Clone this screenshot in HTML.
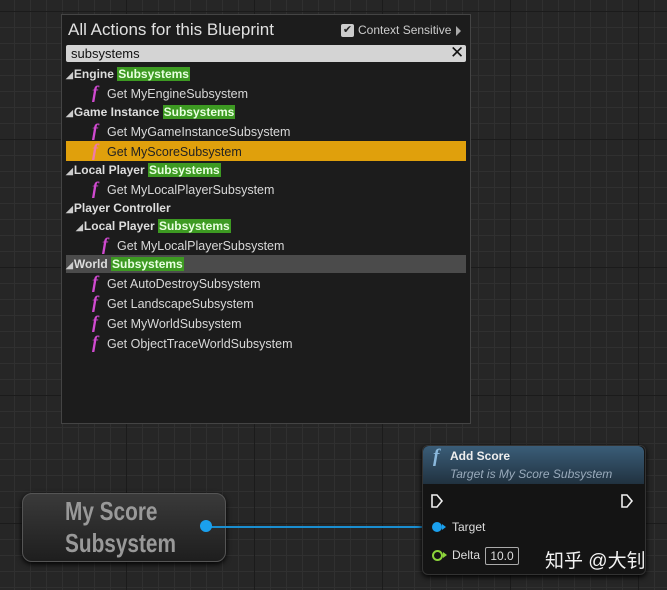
<!DOCTYPE html>
<html><head><style>
body{margin:0;width:667px;height:590px;overflow:hidden;position:relative;font-family:"Liberation Sans",sans-serif;
background-color:#262626;
background-image:linear-gradient(#1b1b1b 1px,transparent 1px),linear-gradient(90deg,#1b1b1b 1px,transparent 1px),linear-gradient(#303030 1px,transparent 1px),linear-gradient(90deg,#303030 1px,transparent 1px);
background-size:128px 128px,128px 128px,16px 16px,16px 16px;background-position:-2px 11px,-2px 11px,-2px 11px,-2px 11px;}
.a{position:absolute;white-space:nowrap}
#panel{left:61px;top:14px;width:408px;height:408px;background:#1c1c1c;border:1px solid #444;}
.h{font-weight:bold;font-size:12px;color:#ddd;height:18px;line-height:18px}
.g{background:#3d9a22;color:#e8ffe0;padding:0 1px}
.i{font-size:12.5px;color:#d8d8d8;height:20px;line-height:19px}
.f{display:inline-block;width:15px;color:#d04ad0;font-family:"Liberation Serif",serif;font-style:italic;font-weight:bold;font-size:18px}
.t{font-size:9px;color:#ccc;margin-right:1px}
</style></head><body>
<div class="a" id="panel"></div>
<div class="a" style="left:68px;top:20px;font-size:17px;color:#e0e0e0">All Actions for this Blueprint</div>
<div class="a" style="left:341px;top:24px;width:13px;height:13px;background:#ccc;border-radius:2px;color:#222;font-size:11px;line-height:13px;text-align:center">✔</div>
<div class="a" style="left:358px;top:23px;font-size:12px;color:#ccc">Context Sensitive</div>
<div class="a" style="left:456px;top:26px;width:0;height:0;border-left:5px solid #aaa;border-top:5px solid transparent;border-bottom:5px solid transparent"></div>
<div class="a" style="left:66px;top:45px;width:400px;height:17px;background:#d4d4d4;border-radius:2px"></div>
<div class="a" style="left:71px;top:45px;font-size:13px;line-height:17px;color:#111">subsystems</div>
<div class="a" style="left:450px;top:43px;font-size:17px;line-height:19px;color:#111">✕</div>

<div class="a" style="left:66px;top:141px;width:400px;height:20px;background:#e0a00c"></div>
<div class="a" style="left:66px;top:255px;width:400px;height:18px;background:#4b4b4b"></div>

<div class="a h" style="left:66px;top:65px"><span class="t">◢</span>Engine <span class="g">Subsystems</span></div>
<div class="a i" style="left:92px;top:83px"><span class="f">f</span>Get MyEngineSubsystem</div>
<div class="a h" style="left:66px;top:103px"><span class="t">◢</span>Game Instance <span class="g">Subsystems</span></div>
<div class="a i" style="left:92px;top:121px"><span class="f">f</span>Get MyGameInstanceSubsystem</div>
<div class="a i" style="left:92px;top:141px;color:#222"><span class="f" style="color:#f07aa8">f</span>Get MyScoreSubsystem</div>
<div class="a h" style="left:66px;top:161px"><span class="t">◢</span>Local Player <span class="g">Subsystems</span></div>
<div class="a i" style="left:92px;top:179px"><span class="f">f</span>Get MyLocalPlayerSubsystem</div>
<div class="a h" style="left:66px;top:199px"><span class="t">◢</span>Player Controller</div>
<div class="a h" style="left:76px;top:217px"><span class="t">◢</span>Local Player <span class="g">Subsystems</span></div>
<div class="a i" style="left:102px;top:235px"><span class="f">f</span>Get MyLocalPlayerSubsystem</div>
<div class="a h" style="left:66px;top:255px"><span class="t">◢</span>World <span class="g">Subsystems</span></div>
<div class="a i" style="left:92px;top:273px"><span class="f">f</span>Get AutoDestroySubsystem</div>
<div class="a i" style="left:92px;top:293px"><span class="f">f</span>Get LandscapeSubsystem</div>
<div class="a i" style="left:92px;top:313px"><span class="f">f</span>Get MyWorldSubsystem</div>
<div class="a i" style="left:92px;top:333px"><span class="f">f</span>Get ObjectTraceWorldSubsystem</div>

<div class="a" style="left:22px;top:493px;width:202px;height:67px;border-radius:10px;background:linear-gradient(#3a3a3a,#1e1e1e);border:1px solid #555;box-shadow:0 2px 6px #000"></div>
<div class="a" style="left:65px;top:495px;font-size:26px;font-weight:bold;color:#999;line-height:32px;transform:scaleX(0.8);transform-origin:0 0">My Score<br>Subsystem</div>
<div class="a" style="left:207px;top:526px;width:220px;height:2px;background:#1a8ed0"></div>
<div class="a" style="left:200px;top:520px;width:12px;height:12px;border-radius:50%;background:#1aa0ee"></div>

<div class="a" style="left:422px;top:445px;width:222px;height:128px;border-radius:6px;background:#141414;border:1px solid #333;box-shadow:0 2px 6px #000"></div>
<div class="a" style="left:423px;top:446px;width:221px;height:38px;border-radius:6px 6px 0 0;background:linear-gradient(#3a5d78,#213240)"></div>
<div class="a" style="left:433px;top:446px;font-family:'Liberation Serif',serif;font-style:italic;font-weight:bold;font-size:19px;color:#8ab8dc">f</div>
<div class="a" style="left:450px;top:449px;font-size:12px;font-weight:bold;color:#eee">Add Score</div>
<div class="a" style="left:450px;top:467px;font-size:12px;font-style:italic;color:#9ab">Target is My Score Subsystem</div>
<svg class="a" style="left:430px;top:493px" width="14" height="16"><path d="M2 2h5l5 6-5 6H2z" fill="none" stroke="#eee" stroke-width="1.6"/></svg>
<svg class="a" style="left:620px;top:493px" width="14" height="16"><path d="M2 2h5l5 6-5 6H2z" fill="none" stroke="#eee" stroke-width="1.6"/></svg>
<div class="a" style="left:432px;top:522px;width:10px;height:10px;border-radius:50%;background:#1aa0ee"></div>
<div class="a" style="left:442px;top:524px;border-left:4px solid #1aa0ee;border-top:3px solid transparent;border-bottom:3px solid transparent"></div>
<div class="a" style="left:452px;top:520px;font-size:12px;color:#ddd">Target</div>
<div class="a" style="left:432px;top:550px;width:7px;height:7px;border-radius:50%;border:2px solid #8cd43a"></div>
<div class="a" style="left:443px;top:552px;border-left:4px solid #8cd43a;border-top:3px solid transparent;border-bottom:3px solid transparent"></div>
<div class="a" style="left:452px;top:548px;font-size:12px;color:#ddd">Delta</div>
<div class="a" style="left:485px;top:547px;width:32px;height:16px;border:1px solid #aaa;border-radius:2px;font-size:12px;color:#ddd;text-align:center;line-height:16px">10.0</div>
<div class="a" style="left:545px;top:546px;font-size:19px;color:#f2f2f2;font-family:'Liberation Sans','Noto Sans CJK SC',sans-serif">知乎 @大钊</div>
</body></html>
